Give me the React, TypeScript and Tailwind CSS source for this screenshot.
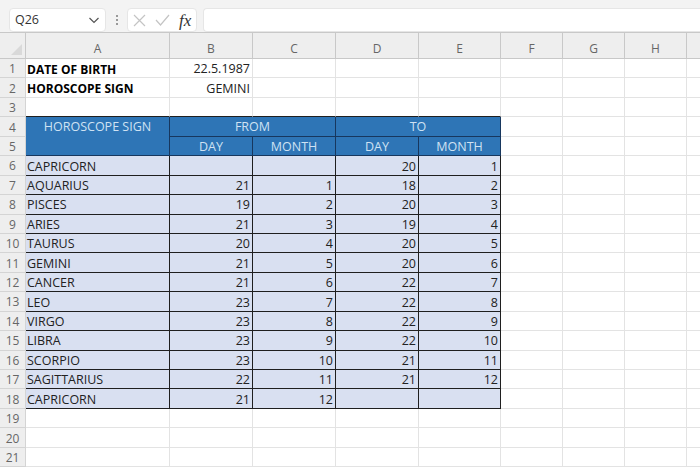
import React from "react";

const cols = ["A", "B", "C", "D", "E", "F", "G", "H", ""];
const data: [string, string, string, string, string][] = [
  ["CAPRICORN", "", "", "20", "1"],
  ["AQUARIUS", "21", "1", "18", "2"],
  ["PISCES", "19", "2", "20", "3"],
  ["ARIES", "21", "3", "19", "4"],
  ["TAURUS", "20", "4", "20", "5"],
  ["GEMINI", "21", "5", "20", "6"],
  ["CANCER", "21", "6", "22", "7"],
  ["LEO", "23", "7", "22", "8"],
  ["VIRGO", "23", "8", "22", "9"],
  ["LIBRA", "23", "9", "22", "10"],
  ["SCORPIO", "23", "10", "21", "11"],
  ["SAGITTARIUS", "22", "11", "21", "12"],
  ["CAPRICORN", "21", "12", "", ""],
];

const Blank = ({ n = 1, dark = false }: { n?: number; dark?: boolean }) => (
  <>
    {Array.from({ length: n }).map((_, i) => (
      <div key={i} className={`border-r border-b border-r-[#e3e3e3] ${dark ? "border-b-[#1f1f1f]" : "border-b-[#e3e3e3]"}`} />
    ))}
  </>
);

const RowNo = ({ n }: { n: number }) => (
  <div className="flex items-center justify-center border-r border-b border-[#d4d4d4] bg-[#eeeeee] pt-[2px] text-[12px] text-[#666666]">
    {n}
  </div>
);

const Head = ({ children, className = "" }: { children: React.ReactNode; className?: string }) => (
  <div className={`flex justify-center whitespace-nowrap border-r border-b border-[#17375e] bg-[#2e75b6] pt-[1px] text-[12.5px] text-[#cfe2f3] ${className}`}>
    {children}
  </div>
);

export default function App() {
  return (
    <div className="h-[467px] w-[700px] overflow-hidden bg-white font-['Open_Sans',sans-serif]">
      <div className="flex h-[33px] items-start border-b border-[#c8c8c8] bg-[#f3f3f3] pt-[8px]">
        <div className="ml-[9px] flex h-[24px] w-[97px] items-center justify-between rounded-[4px] border border-[#e6e6e6] bg-white pl-[5px] pr-[5px] text-[12.5px] text-[#333333]">
          <span>Q26</span>
          <svg width="12" height="12" viewBox="0 0 12 12" fill="none" stroke="#555555" strokeWidth="1.2">
            <path d="M1.5 4 L6 8.5 L10.5 4" />
          </svg>
        </div>
        <div className="flex h-[24px] w-[21px] flex-col items-center justify-center gap-[2px]">
          <span className="h-[2px] w-[2px] bg-[#999999]" />
          <span className="h-[2px] w-[2px] bg-[#999999]" />
          <span className="h-[2px] w-[2px] bg-[#999999]" />
        </div>
        <div className="flex h-[24px] w-[70px] items-center gap-[9px] rounded-[4px] border border-[#e6e6e6] bg-white pl-[5px]">
          <svg width="13" height="13" viewBox="0 0 13 13" fill="none" stroke="#c4c4c4" strokeWidth="1.2">
            <path d="M1 1 L12 12 M12 1 L1 12" />
          </svg>
          <svg width="15" height="12" viewBox="0 0 15 12" fill="none" stroke="#c4c4c4" strokeWidth="1.2">
            <path d="M1 6 L5.5 11 L14 1" />
          </svg>
          <span className="font-['Liberation_Serif',serif] text-[17px] italic leading-none text-[#333333]">
            fx
          </span>
        </div>
        <div className="ml-[6px] h-[24px] flex-1 rounded-l-[4px] border border-r-0 border-[#e6e6e6] bg-white" />
      </div>

      <div className="grid w-[706px] grid-cols-[26px_144px_83px_83px_83px_82px_62px_62px_62px_19px] grid-rows-[26px_repeat(21,19.44px)] text-[12.5px] text-[#222222]">
        <div className="flex items-end justify-end border-r border-b border-[#c8c8c8] bg-[#eeeeee] p-[3px]">
          <svg width="11" height="11" viewBox="0 0 11 11">
            <path d="M11 0 V11 H0 Z" fill="#d9d9d9" />
          </svg>
        </div>
        {cols.map((c, i) => (
          <div
            key={i}
            className="flex items-center justify-center border-r border-b border-[#c8c8c8] bg-[#eeeeee] pt-[6px] text-[12px] text-[#666666]"
          >
            {c}
          </div>
        ))}

        <RowNo n={1} />
        <div className="flex items-center whitespace-nowrap border-r border-b border-[#e3e3e3] pl-[1px] pt-[3px] text-[12px] font-bold text-black">DATE OF BIRTH</div>
        <div className="flex items-center justify-end border-r border-b border-[#e3e3e3] pr-[2px] pt-[3px]">22.5.1987</div>
        <Blank n={7} />

        <RowNo n={2} />
        <div className="flex items-center whitespace-nowrap border-r border-b border-[#e3e3e3] pl-[1px] pt-[3px] text-[12px] font-bold text-black">HOROSCOPE SIGN</div>
        <div className="flex items-center justify-end border-r border-b border-[#e3e3e3] pr-[2px] pt-[3px]">GEMINI</div>
        <Blank n={7} />

        <RowNo n={3} />
        <Blank n={5} dark />
        <Blank n={4} />

        <RowNo n={4} />
        <Head className="row-span-2">HOROSCOPE SIGN</Head>
        <Head className="col-span-2">FROM</Head>
        <Head className="col-span-2">TO</Head>
        <Blank n={4} />

        <RowNo n={5} />
        <Head>DAY</Head>
        <Head>MONTH</Head>
        <Head>DAY</Head>
        <Head>MONTH</Head>
        <Blank n={4} />

        {data.map((r, i) => (
          <React.Fragment key={i}>
            <RowNo n={i + 6} />
            {r.map((v, j) => (
              <div
                key={j}
                className={`flex items-center border-r border-b border-[#1f1f1f] bg-[#d9e0f1] pt-[3px] ${
                  j === 0 ? "justify-start pl-[1px]" : "justify-end pr-[2px]"
                }`}
              >
                {v}
              </div>
            ))}
            <Blank n={4} />
          </React.Fragment>
        ))}

        {[19, 20, 21].map((n) => (
          <React.Fragment key={n}>
            <RowNo n={n} />
            <Blank n={9} />
          </React.Fragment>
        ))}
      </div>
    </div>
  );
}
